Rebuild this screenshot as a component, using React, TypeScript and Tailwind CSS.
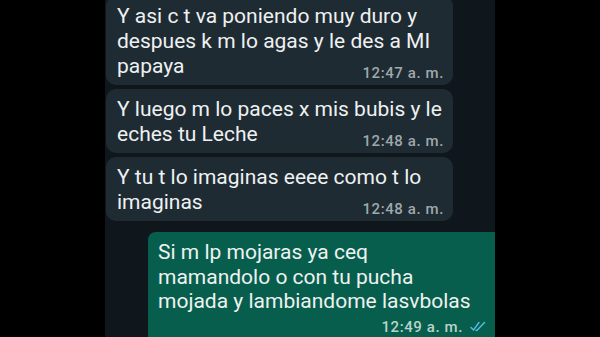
const font = { fontFamily: "Roboto, 'Noto Sans', sans-serif" };

type Msg = { lines: string[]; time: string; out?: boolean };

const messages: Msg[] = [
  { lines: ["Y asi c t va poniendo muy duro y", "despues k m lo agas y le des a MI", "papaya"], time: "12:47 a. m." },
  { lines: ["Y luego m lo paces x mis bubis y le", "eches tu Leche"], time: "12:48 a. m." },
  { lines: ["Y tu t lo imaginas eeee como t lo", "imaginas"], time: "12:48 a. m." },
  { lines: ["Si m lp mojaras ya ceq", "mamandolo o con tu pucha", "mojada y lambiandome lasvbolas"], time: "12:49 a. m.", out: true },
];

function Ticks() {
  return (
    <svg width="16" height="11" viewBox="0 0 16 11" fill="none" stroke="#53bdeb" strokeWidth="1.4" strokeLinecap="round">
      <path d="M1 6.5l2.5 2.5L9 1.5" />
      <path d="M6 9.3l0.8 0.2L14.5 1.5" />
    </svg>
  );
}

function Bubble({ m }: { m: Msg }) {
  if (m.out) {
    return (
      <div className="ml-[42px] mt-[7px] rounded-tl-[8px] bg-[#075e4d] pl-[10px] pr-[9px] pt-[8px] pb-[6px]">
        <div className="text-[21px] leading-[24.5px] text-[#eef2f0]">
          {m.lines.map((l) => (
            <div key={l}>{l}</div>
          ))}
        </div>
        <div className="mt-[5px] flex items-center justify-end gap-[7px] text-[15px] font-medium leading-[16px] tracking-[0.6px] text-[#b9d3cb]">
          <span>{m.time}</span>
          <Ticks />
        </div>
      </div>
    );
  }
  return (
    <div className="mr-[42px] mb-[4px] rounded-[10px] bg-[#1f2b32] pl-[11px] pr-[9px] pt-[8px] pb-[4px]">
      <div className="text-[21px] leading-[25px] text-[#eef1f2]">
        {m.lines.map((l) => (
          <div key={l}>{l}</div>
        ))}
      </div>
      <div className="-mt-[14px] flex justify-end text-[15px] font-medium leading-[16px] tracking-[0.6px] text-[#9ea8ad]">
        {m.time}
      </div>
    </div>
  );
}

export default function App() {
  return (
    <div className="flex h-[337px] w-[600px] overflow-hidden bg-black" style={font}>
      <div className="ml-[105px] h-full w-[390px] overflow-hidden bg-[#0f171c] pl-[1px]">
        <div className="-mt-[4px] flex flex-col">
          {messages.map((m) => (
            <Bubble key={m.time + m.lines[0]} m={m} />
          ))}
        </div>
      </div>
    </div>
  );
}
